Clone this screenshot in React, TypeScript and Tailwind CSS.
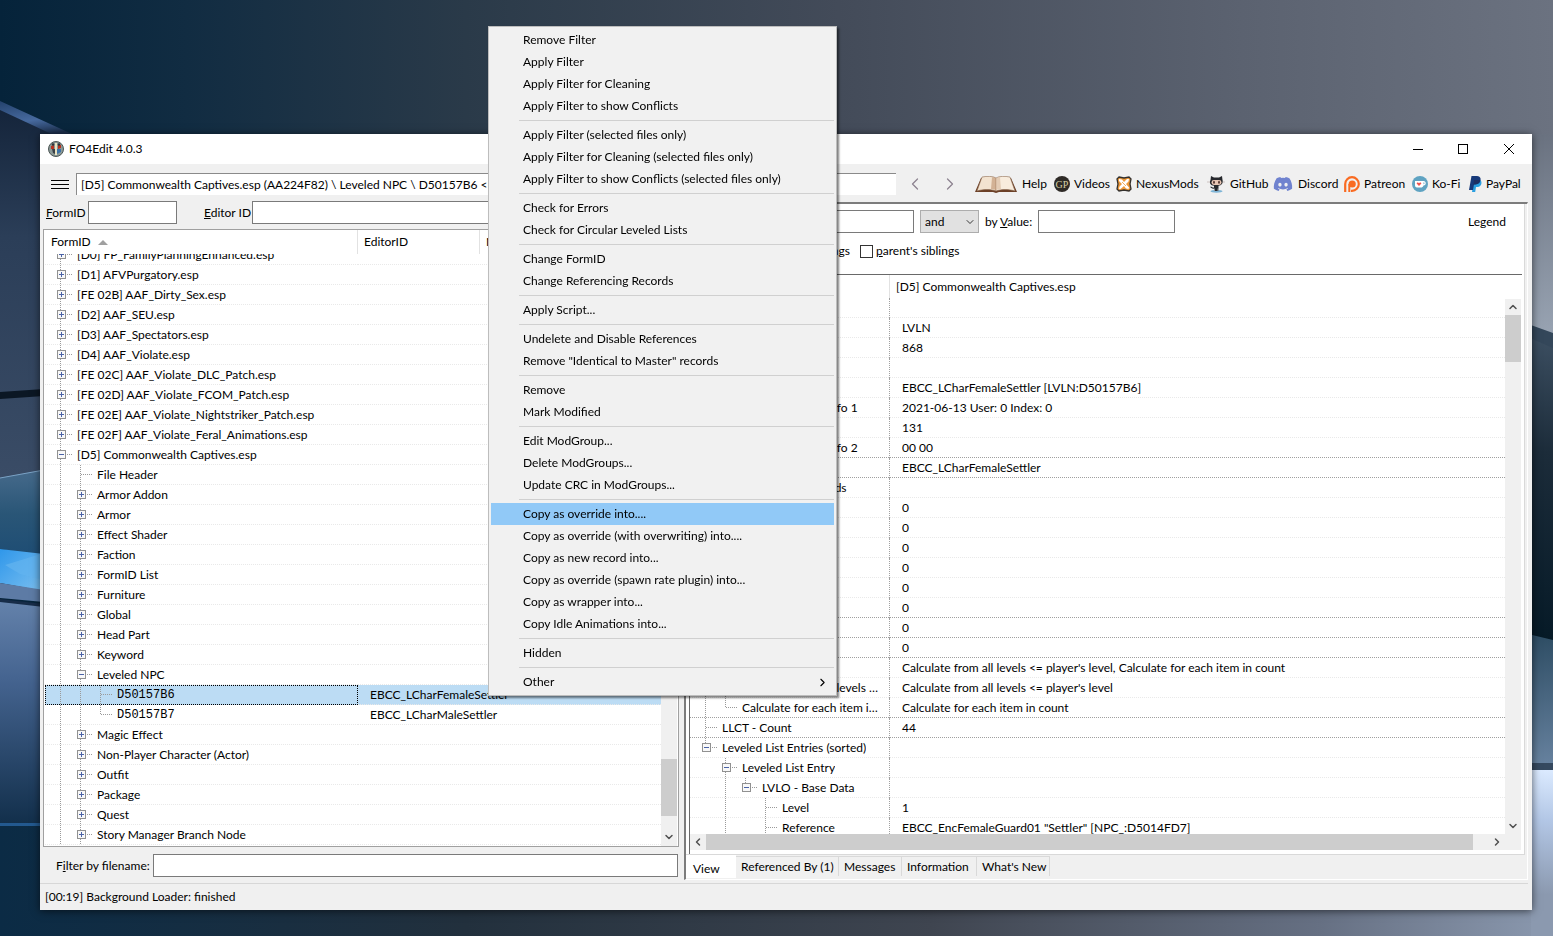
import type { ReactNode } from "react";
import { clsx } from "clsx";
import { ChevronDown, ChevronLeft, ChevronRight, ChevronUp } from "lucide-react";
import { FaDiscord } from "react-icons/fa";

// one 20px cell of a tree's gutter
// v: line passing through, t: branch, l: last branch, +/-: expander, =: expander with nothing below it
type Cell = "v" | "t" | "l" | "+" | "-" | "=" | " ";

type Row = {
  cells: Cell[];
  label: string;
  value?: string;
  mono?: boolean;
  selected?: boolean;
  strong?: boolean;
};

const files = [
  "[D0] FP_FamilyPlanningEnhanced.esp",
  "[D1] AFVPurgatory.esp",
  "[FE 02B] AAF_Dirty_Sex.esp",
  "[D2] AAF_SEU.esp",
  "[D3] AAF_Spectators.esp",
  "[D4] AAF_Violate.esp",
  "[FE 02C] AAF_Violate_DLC_Patch.esp",
  "[FE 02D] AAF_Violate_FCOM_Patch.esp",
  "[FE 02E] AAF_Violate_Nightstriker_Patch.esp",
  "[FE 02F] AAF_Violate_Feral_Animations.esp",
];

const group = (label: string): Row => ({ cells: ["v", "+"], label });

const navRows: Row[] = [
  ...files.map((label): Row => ({ cells: ["+"], label })),
  { cells: ["-"], label: "[D5] Commonwealth Captives.esp" },
  { cells: ["v", "t"], label: "File Header" },
  ...["Armor Addon", "Armor", "Effect Shader", "Faction", "FormID List", "Furniture", "Global", "Head Part", "Keyword"].map(group),
  { cells: ["v", "-"], label: "Leveled NPC" },
  { cells: ["v", "v", "t"], label: "D50157B6", value: "EBCC_LCharFemaleSettler", mono: true, selected: true },
  { cells: ["v", "v", "l"], label: "D50157B7", value: "EBCC_LCharMaleSettler", mono: true },
  ...["Magic Effect", "Non-Player Character (Actor)", "Outfit", "Package", "Quest", "Story Manager Branch Node"].map(group),
];

const recordRows: Row[] = [
  { cells: ["-"], label: "Record Header" },
  { cells: ["v", "t"], label: "Signature", value: "LVLN" },
  { cells: ["v", "t"], label: "Data Size", value: "868" },
  { cells: ["v", "t"], label: "Record Flags" },
  { cells: ["v", "t"], label: "FormID", value: "EBCC_LCharFemaleSettler [LVLN:D50157B6]" },
  { cells: ["v", "t"], label: "Version Control Info 1", value: "2021-06-13 User: 0 Index: 0" },
  { cells: ["v", "t"], label: "Form Version", value: "131" },
  { cells: ["v", "l"], label: "Version Control Info 2", value: "00 00", strong: true },
  { cells: ["t"], label: "EDID - Editor ID", value: "EBCC_LCharFemaleSettler", strong: true },
  { cells: ["-"], label: "OBND - Object Bounds" },
  { cells: ["v", "t"], label: "X1", value: "0" },
  { cells: ["v", "t"], label: "Y1", value: "0" },
  { cells: ["v", "t"], label: "Z1", value: "0" },
  { cells: ["v", "t"], label: "X2", value: "0" },
  { cells: ["v", "t"], label: "Y2", value: "0" },
  { cells: ["v", "l"], label: "Z2", value: "0", strong: true },
  { cells: ["t"], label: "LVLD", value: "0", strong: true },
  { cells: ["t"], label: "LVLM", value: "0", strong: true },
  { cells: ["-"], label: "LVLF - Flags", value: "Calculate from all levels <= player's level, Calculate for each item in count" },
  { cells: ["v", "t"], label: "Calculate from all levels <= player's level", value: "Calculate from all levels <= player's level" },
  { cells: ["v", "l"], label: "Calculate for each item in count", value: "Calculate for each item in count", strong: true },
  { cells: ["t"], label: "LLCT - Count", value: "44", strong: true },
  { cells: ["="], label: "Leveled List Entries (sorted)" },
  { cells: [" ", "-"], label: "Leveled List Entry" },
  { cells: [" ", "v", "="], label: "LVLO - Base Data" },
  { cells: [" ", "v", " ", "t"], label: "Level", value: "1" },
  { cells: [" ", "v", " ", "t"], label: "Reference", value: 'EBCC_EncFemaleGuard01 "Settler" [NPC_:D5014FD7]' },
];

const menu = [
  ["Remove Filter", "Apply Filter", "Apply Filter for Cleaning", "Apply Filter to show Conflicts"],
  ["Apply Filter (selected files only)", "Apply Filter for Cleaning (selected files only)", "Apply Filter to show Conflicts (selected files only)"],
  ["Check for Errors", "Check for Circular Leveled Lists"],
  ["Change FormID", "Change Referencing Records"],
  ["Apply Script..."],
  ["Undelete and Disable References", 'Remove "Identical to Master" records'],
  ["Remove", "Mark Modified"],
  ["Edit ModGroup...", "Delete ModGroups...", "Update CRC in ModGroups..."],
  [
    "Copy as override into....",
    "Copy as override (with overwriting) into....",
    "Copy as new record into...",
    "Copy as override (spawn rate plugin) into...",
    "Copy as wrapper into...",
    "Copy Idle Animations into...",
  ],
  ["Hidden"],
  ["Other"],
];

function Gutter({ cell }: { cell: Cell }) {
  const box = cell === "+" || cell === "-" || cell === "=";
  const down = cell === "v" || cell === "t" || cell === "+" || cell === "-";
  return (
    <svg width="20" height="20" className="shrink-0" shapeRendering="crispEdges" aria-hidden="true">
      {cell !== " " && (
        <path d={down && cell !== "-" ? "M3.5 0V20" : "M3.5 0V10"} stroke="#9a9a9a" strokeDasharray="1 1" fill="none" />
      )}
      {cell === "-" && <path d="M3.5 14V20" stroke="#9a9a9a" strokeDasharray="1 1" />}
      {cell !== " " && cell !== "v" && <path d="M4 9.5H16" stroke="#9a9a9a" strokeDasharray="1 1" />}
      {box && (
        <>
          <rect x="0.5" y="5.5" width="8" height="8" fill="#f8f8f8" stroke="#919191" />
          <path d={cell === "+" ? "M2 9.5H7M4.5 7V12" : "M2 9.5H7"} stroke="#4b63a7" />
        </>
      )}
    </svg>
  );
}

function Desktop() {
  return (
    <svg className="absolute inset-0 h-full w-full" viewBox="0 0 1553 936" preserveAspectRatio="none" aria-hidden="true">
      <defs>
        <linearGradient id="sky" x1="0" y1="0" x2="1" y2="0">
          <stop offset="0" stopColor="#05233a" />
          <stop offset="0.12" stopColor="#112c42" />
          <stop offset="0.3" stopColor="#2a3a49" />
          <stop offset="0.54" stopColor="#434b59" />
          <stop offset="0.8" stopColor="#5b6270" />
          <stop offset="1" stopColor="#6b7280" />
        </linearGradient>
        <linearGradient id="floor" x1="0" y1="0" x2="1" y2="0">
          <stop offset="0" stopColor="#0b2b45" />
          <stop offset="0.3" stopColor="#22303d" />
          <stop offset="0.6" stopColor="#3f4550" />
          <stop offset="0.85" stopColor="#667083" />
          <stop offset="1" stopColor="#8b99af" />
        </linearGradient>
        <linearGradient id="wing" x1="0" y1="0" x2="0" y2="1">
          <stop offset="0" stopColor="#14243a" />
          <stop offset="0.35" stopColor="#2b3e58" />
          <stop offset="1" stopColor="#3a4c66" />
        </linearGradient>
        <linearGradient id="band" x1="0" y1="0" x2="0.3" y2="1">
          <stop offset="0" stopColor="#24426c" />
          <stop offset="0.6" stopColor="#476a9f" />
          <stop offset="1" stopColor="#1c2f4c" />
        </linearGradient>
        <linearGradient id="glass" x1="0" y1="0" x2="0" y2="1">
          <stop offset="0" stopColor="#466a8b" />
          <stop offset="0.5" stopColor="#2a5677" />
          <stop offset="1" stopColor="#1e4d74" />
        </linearGradient>
        <linearGradient id="ice" x1="0" y1="0" x2="1" y2="1">
          <stop offset="0" stopColor="#2f97ea" />
          <stop offset="1" stopColor="#7cc0f0" />
        </linearGradient>
        <linearGradient id="lower" x1="0" y1="0" x2="0" y2="1">
          <stop offset="0" stopColor="#6482ab" />
          <stop offset="0.35" stopColor="#456490" />
          <stop offset="1" stopColor="#122f4b" />
        </linearGradient>
        <linearGradient id="rim" x1="0" y1="0" x2="0" y2="1">
          <stop offset="0" stopColor="#6a7280" />
          <stop offset="1" stopColor="#98a3b2" />
        </linearGradient>
        <linearGradient id="orb" x1="0" y1="0" x2="0" y2="1">
          <stop offset="0" stopColor="#3f5265" />
          <stop offset="0.4" stopColor="#1c2c3a" />
          <stop offset="1" stopColor="#061a27" />
        </linearGradient>
        <linearGradient id="sea" x1="0" y1="0" x2="0" y2="1">
          <stop offset="0" stopColor="#2e4d64" />
          <stop offset="1" stopColor="#66819e" />
        </linearGradient>
        <linearGradient id="snow" x1="0" y1="0" x2="0" y2="1">
          <stop offset="0" stopColor="#dbeaff" />
          <stop offset="0.3" stopColor="#b3c7e6" />
          <stop offset="0.75" stopColor="#8b99af" />
          <stop offset="1" stopColor="#8b99af" />
        </linearGradient>
      </defs>
      <rect width="1553" height="936" fill="url(#sky)" />
      <rect y="826" width="1553" height="110" fill="url(#floor)" />
      <path d="M0 106L76 140V480H0Z" fill="url(#wing)" />
      <path d="M0 101L72 134L60 138L0 110Z" fill="url(#band)" />
      <path d="M0 392L44 389V396L0 399Z" fill="#0b1724" />
      <path d="M0 478L44 470V556L0 549Z" fill="url(#glass)" />
      <path d="M0 478L44 470" stroke="#7ba3c6" />
      <path d="M0 549L44 554V591L0 583Z" fill="url(#ice)" />
      <path d="M5 565L44 553V580L20 574Z" fill="#63b4f0" opacity="0.7" />
      <path d="M0 583L44 590V602L0 598Z" fill="#5d7ba5" />
      <path d="M0 600L44 606V824H0Z" fill="url(#lower)" />
      <path d="M0 599L44 604V607L0 602Z" fill="#172c48" />
      <rect y="823" width="44" height="3" fill="#23598f" />
      <rect x="1531" y="134" width="22" height="200" fill="url(#rim)" />
      <path d="M1528 326L1553 334V640H1528Z" fill="url(#orb)" />
      <path d="M1528 324L1553 333V348L1528 337Z" fill="#34475a" />
      <path d="M1528 634L1553 640V764H1528Z" fill="url(#sea)" />
      <rect x="1528" y="763" width="25" height="8" fill="#35495f" />
      <rect x="1531" y="770" width="22" height="166" fill="url(#snow)" />
    </svg>
  );
}

function AppIcon() {
  return (
    <svg width="16" height="16" viewBox="0 0 16 16" aria-hidden="true">
      <circle cx="8" cy="8" r="7.5" fill="#8c9a98" stroke="#4c5654" />
      <path d="M8 2V14" stroke="#e9e2c0" strokeWidth="2" />
      <path d="M3 5L6 4V8H3ZM10 4H13V7L10 8Z" fill="#b8321f" />
      <path d="M4 8H7V13L5 12Z" fill="#3a4045" />
      <path d="M9 8H13V11L9 13Z" fill="#3b72a8" />
      <circle cx="5" cy="3.5" r="1.2" fill="#2c3338" />
      <circle cx="11" cy="3.5" r="1.2" fill="#2c3338" />
    </svg>
  );
}

function Book() {
  return (
    <svg width="42" height="17" viewBox="0 0 42 17" aria-hidden="true">
      <path d="M6 2L0 16H18L21 17L24 16H42L36 2Z" fill="#6b3f26" />
      <path d="M7 1C12 0 18 0 21 2L21 15C16 13 8 13 2 15Z" fill="#f3e3d0" stroke="#8c6a50" strokeWidth="0.6" />
      <path d="M35 1C30 0 24 0 21 2L21 15C26 13 34 13 40 15Z" fill="#f8ecdd" stroke="#8c6a50" strokeWidth="0.6" />
      <path d="M17 1.5C19 1 20 1.5 21 2.5V14.5C20 13.5 18 13 16 13Z" fill="#c49c7c" opacity="0.7" />
      <path d="M21 2.5C22 1.5 24 1 25 1.5L26 13C24 13 22 13.5 21 14.5Z" fill="#dcbfa4" opacity="0.7" />
    </svg>
  );
}

function GamerPoets() {
  return (
    <svg width="16" height="16" viewBox="0 0 16 16" aria-hidden="true">
      <circle cx="8" cy="8" r="8" fill="#2e2a26" />
      <text x="8" y="11.5" textAnchor="middle" fontSize="10" fontFamily="Liberation Serif, serif" fill="#d9cfa4">GP</text>
    </svg>
  );
}

function Nexus() {
  return (
    <svg width="16" height="16" viewBox="0 0 16 16" aria-hidden="true">
      <path d="M3 1L8 2L13 1L15 3L14 8L15 13L13 15L8 14L3 15L1 13L2 8L1 3Z" fill="#ee9a3a" stroke="#34302c" strokeWidth="1.3" />
      <path d="M3 3L6 3.5L8 6L11 3L13 3L12.500 5.500L10 8L13 11.500L12.500 13L10 12.500L8 10L4.500 13L3 13L3.500 10.500L6 8L3 5Z" fill="#fff" />
      <path d="M6 6L10 10" stroke="#ee9a3a" strokeWidth="0.8" />
    </svg>
  );
}

function Octocat() {
  return (
    <svg width="18" height="17" viewBox="0 0 18 17" aria-hidden="true">
      <ellipse cx="9.5" cy="15.3" rx="6" ry="1.5" fill="#7db4d6" />
      <path d="M4 0L7 1.5H12L15 0L15.5 4C16.5 7 14.5 9.5 11.5 9.8V15H7V9.8C3.5 9.5 2 7 3.5 4Z" fill="#27292d" />
      <rect x="4.5" y="4" width="10" height="5" rx="2.4" fill="#e8c6b4" />
      <ellipse cx="7" cy="6.3" rx="1" ry="1.5" fill="#5b3c36" />
      <ellipse cx="12" cy="6.3" rx="1" ry="1.5" fill="#5b3c36" />
      <path d="M7.5 15V12.5M11 15V12.5" stroke="#fff" strokeWidth="0.5" />
      <path d="M7 12C5 13 5 11 3.5 11" stroke="#27292d" strokeWidth="1.2" fill="none" />
      <path d="M0 6H3M15.5 6H18" stroke="#b9a9a4" strokeWidth="0.6" />
    </svg>
  );
}

function Patreon() {
  return (
    <svg width="16" height="16" viewBox="0 0 16 16" fill="none" stroke="#f96b22" aria-hidden="true">
      <path d="M1.2 16V8A6.8 6.8 0 1 1 8 14.8H7" strokeWidth="2.2" />
      <path d="M5.3 16V8" strokeWidth="2" />
      <circle cx="8.2" cy="8" r="3.6" fill="#f96b22" stroke="none" />
    </svg>
  );
}

function KoFi() {
  return (
    <svg width="16" height="16" viewBox="0 0 16 16" aria-hidden="true">
      <circle cx="8" cy="8" r="8" fill="#5fa3c2" />
      <path d="M3 5H11.5C14.5 5 14.5 9.5 11.5 9.5C11 11 10 11.5 9 11.5H5C3.5 11.5 3 10.5 3 9Z" fill="#fff" />
      <path d="M11.5 6.3C12.8 6.3 12.8 8.3 11.5 8.3Z" fill="#5fa3c2" />
      <path d="M7 10L4.8 7.8C4.2 6.5 6 5.800 7 7C8 5.800 9.800 6.500 9.200 7.800Z" fill="#f0524f" />
    </svg>
  );
}

function PayPal() {
  return (
    <svg width="14" height="16" viewBox="0 0 14 16" aria-hidden="true">
      <path d="M5 4H11C13.5 5 13 11 8.5 11H7L6.2 16H3Z" fill="#2a9fe0" />
      <path d="M2.5 0H8C12 0 12.5 4 10.5 6.5C9.5 8 7.5 8.5 5 8.5L4 14H0Z" fill="#173a7a" />
      <path d="M5 4H10.9C11.5 5 10.5 8.5 5 8.5L4.5 9Z" fill="#1d2f62" />
    </svg>
  );
}

const links: { label: string; icon: ReactNode; className: string }[] = [
  { label: "Help", icon: <Book />, className: "w-[79px] gap-[5px]" },
  { label: "Videos", icon: <GamerPoets />, className: "w-[62px] gap-1" },
  { label: "NexusMods", icon: <Nexus />, className: "w-[91px] gap-1" },
  { label: "GitHub", icon: <Octocat />, className: "w-[66px] gap-[5px]" },
  { label: "Discord", icon: <FaDiscord size={20} color="#7083cf" />, className: "w-[71px] gap-[5px]" },
  { label: "Patreon", icon: <Patreon />, className: "w-[68px] gap-1" },
  { label: "Ko-Fi", icon: <KoFi />, className: "w-[57px] gap-1" },
  { label: "PayPal", icon: <PayPal />, className: "w-[54px] gap-[3px]" },
];

function TitleBar() {
  return (
    <header className="flex h-[30px] items-center bg-white pl-2">
      <AppIcon />
      <h1 className="ml-[5px] flex-1">FO4Edit 4.0.3</h1>
      <button aria-label="Minimize" className="flex h-full w-[45px] items-center justify-center">
        <span className="h-px w-[10px] bg-black" />
      </button>
      <button aria-label="Maximize" className="flex h-full w-[45px] items-center justify-center">
        <span className="h-[10px] w-[10px] border border-black" />
      </button>
      <button aria-label="Close" className="flex h-full w-[47px] items-center justify-center">
        <svg width="10" height="10" stroke="#000" aria-hidden="true">
          <path d="M0 0L10 10M10 0L0 10" />
        </svg>
      </button>
    </header>
  );
}

function Toolbar() {
  return (
    <div className="flex h-[37px] items-center pt-[3px] pr-[9px] pl-[11px]">
      <button aria-label="Main menu" className="flex w-[18px] flex-col gap-[3px]">
        <span className="h-px bg-black" />
        <span className="h-px bg-black" />
        <span className="h-px bg-black" />
      </button>
      <input
        aria-label="Path"
        readOnly
        defaultValue="[D5] Commonwealth Captives.esp (AA224F82) \ Leveled NPC \ D50157B6 <EBCC_LCharFemaleSettler>"
        className="ml-[7px] h-[22px] min-w-0 flex-1 border-t border-l border-[#8a8a8a] bg-white px-1"
      />
      <button aria-label="Back" className="ml-[9px] w-5 text-[#8d8391]">
        <ChevronLeft size={20} strokeWidth={1.5} />
      </button>
      <button aria-label="Forward" className="ml-[15px] w-5 text-[#8d8391]">
        <ChevronRight size={20} strokeWidth={1.5} />
      </button>
      <nav className="ml-[15px] flex">
        {links.map(({ label, icon, className }) => (
          <a key={label} href="#" className={clsx("flex shrink-0 items-center whitespace-nowrap", className)}>
            {icon}
            {label}
          </a>
        ))}
      </nav>
    </div>
  );
}

const field = "h-[23px] border border-[#7a7a7a] bg-white px-1";

function NavTree() {
  return (
    <div className="flex min-h-0 flex-1 border border-[#a0a0a0] bg-white pl-px">
      <div
        className="min-w-0 flex-1 overflow-hidden"
        ref={(el) => {
          if (el) el.scrollTop = 9;
        }}
      >
        <table className="mb-5 w-full table-fixed border-separate border-spacing-0 text-left">
          <thead>
            <tr className="h-6">
              <th className="sticky top-0 w-[313px] border-r border-[#e2e2e2] bg-white p-0 pl-[6px] font-normal">
                <span className="flex items-center gap-[7px]">
                  FormID
                  <svg width="10" height="5" aria-hidden="true">
                    <path d="M0 5L5 0L10 5Z" fill="#a0a0a0" />
                  </svg>
                </span>
              </th>
              <th className="sticky top-0 w-[122px] border-r border-[#e2e2e2] bg-white p-0 pl-[6px] font-normal">EditorID</th>
              <th className="sticky top-0 bg-white p-0 pl-[6px] font-normal">Name</th>
            </tr>
          </thead>
          <tbody>
            {navRows.map((row) => (
              <tr key={row.label} className={row.selected ? "bg-[#bcdcf4]" : undefined}>
                <td className="p-0">
                  <div
                    className={clsx(
                      "flex h-5 items-center border-dotted pl-3",
                      row.selected ? "outline-1 -outline-offset-1 outline-dotted outline-black" : "border-b border-[#e9e9e9]",
                    )}
                  >
                    {row.cells.map((cell, i) => (
                      <Gutter key={i} cell={cell} />
                    ))}
                    <span className={row.mono ? "font-['Liberation_Mono',monospace]" : undefined}>{row.label}</span>
                  </div>
                </td>
                <td colSpan={2} className="p-0">
                  <div className="flex h-5 items-center border-b border-dotted border-[#e9e9e9] pl-3">{row.value}</div>
                </td>
              </tr>
            ))}
          </tbody>
        </table>
      </div>
      <div className="mt-6 mr-px flex w-4 flex-col items-center bg-[#f0f0f0] text-[#505050]">
        <ChevronUp size={12} strokeWidth={3} className="my-[2px]" />
        <span className="flex-1" />
        <span className="h-[57px] w-full bg-[#cdcdcd]" />
        <ChevronDown size={12} strokeWidth={3} className="mt-[15px] mb-[3px]" />
      </div>
    </div>
  );
}

function LeftPane() {
  return (
    <section className="flex w-[636px] shrink-0 flex-col">
      <div className="flex items-center">
        <label htmlFor="form-id" className="w-[45px] pl-[3px] whitespace-nowrap">
          <u>F</u>ormID
        </label>
        <input id="form-id" className={clsx(field, "w-[89px]")} />
        <label htmlFor="editor-id" className="ml-[27px] w-12 whitespace-nowrap">
          <u>E</u>ditor ID
        </label>
        <input id="editor-id" className={clsx(field, "min-w-0 flex-1")} />
      </div>
      <div className="mt-[5px] flex min-h-0 flex-1 flex-col">
        <NavTree />
      </div>
      <div className="mt-[7px] mb-[6px] flex items-center">
        <label htmlFor="file-filter" className="w-[110px] pl-[13px] whitespace-nowrap">
          F<u>i</u>lter by filename:
        </label>
        <input id="file-filter" className={clsx(field, "mr-px min-w-0 flex-1")} />
      </div>
    </section>
  );
}

function RecordTable() {
  return (
    <div className="ml-[3px] mr-[2px] flex min-h-0 flex-1 flex-col border-t border-l border-[#696969]">
      <div className="flex min-h-0 flex-1">
        <div className="min-w-0 flex-1 overflow-hidden">
          <table className="w-full table-fixed border-separate border-spacing-0 text-left">
            <thead>
              <tr className="h-[23px]">
                <th className="w-[200px] border-r border-[#e2e2e2] p-0 font-normal" />
                <th className="p-0 pl-[6px] font-normal">[D5] Commonwealth Captives.esp</th>
              </tr>
            </thead>
            <tbody>
              {recordRows.map((row, i) => {
                const line = row.strong ? "border-[#a0a0a0]" : "border-[#e9e9e9]";
                return (
                  <tr key={i}>
                    <td className="border-r border-dotted border-[#a0a0a0] p-0">
                      <div className={clsx("flex h-5 items-center border-b border-dotted pr-2 pl-3", line)}>
                        {row.cells.map((cell, j) => (
                          <Gutter key={j} cell={cell} />
                        ))}
                        <span className="truncate">{row.label}</span>
                      </div>
                    </td>
                    <td className="p-0">
                      <div className={clsx("flex h-5 items-center border-b border-dotted pl-3 whitespace-nowrap", line)}>
                        {row.value}
                      </div>
                    </td>
                  </tr>
                );
              })}
            </tbody>
          </table>
        </div>
        <div className="mt-6 mr-px flex w-4 flex-col items-center bg-[#f0f0f0] text-[#505050]">
          <ChevronUp size={12} strokeWidth={3} className="my-[2px]" />
          <span className="h-[47px] w-full bg-[#cdcdcd]" />
          <span className="flex-1" />
          <ChevronDown size={12} strokeWidth={3} className="my-[2px]" />
        </div>
      </div>
      <div className="mb-1 flex h-4 items-center bg-[#f0f0f0] text-[#505050]">
        <ChevronLeft size={12} strokeWidth={3} className="mx-[2px]" />
        <span className="h-full flex-1 bg-[#cdcdcd]" />
        <ChevronRight size={12} strokeWidth={3} className="mr-[18px] ml-[18px]" />
        <span className="h-full w-px bg-white" />
      </div>
    </div>
  );
}

const tabs = ["View", "Referenced By (1)", "Messages", "Information", "What's New"];
const tabWidths = ["w-[50px]", "w-[103px]", "w-[63px]", "w-[75px]", "w-[73px]"];

function RightPane() {
  return (
    <section className="mt-px mr-1 mb-[3px] ml-[5px] flex min-w-0 flex-1 flex-col border-2 border-r border-b border-t-[#7c7c7c] border-r-white border-b-white border-l-[#7c7c7c]">
      <div className="mr-[2px] flex min-h-0 flex-1 flex-col border-r border-b border-[#d9d9d9] bg-white">
        <div className="flex items-center pt-[6px]">
          <label htmlFor="by-name" className="w-[78px] pl-2">
            by <u>N</u>ame:
          </label>
          <input id="by-name" className={clsx(field, "w-[150px]")} />
          <div className="relative ml-[6px]">
            <select aria-label="Operator" className="h-[23px] w-[59px] appearance-none border border-[#adadad] bg-[#e1e1e1] pl-1">
              <option>and</option>
              <option>or</option>
            </select>
            <ChevronDown size={12} strokeWidth={1.5} className="pointer-events-none absolute top-[6px] right-[3px]" />
          </div>
          <label htmlFor="by-value" className="ml-[6px] w-[53px] whitespace-nowrap">
            by <u>V</u>alue:
          </label>
          <input id="by-value" className={clsx(field, "w-[137px]")} />
          <button className="mr-[18px] ml-auto">Legend</button>
        </div>
        <div className="mt-2 mb-[13px] flex h-5 items-center">
          <label className="flex w-[164px] items-center justify-end gap-[3px]">
            <input type="checkbox" className="h-[13px] w-[13px] appearance-none border border-[#333] bg-white" />
            siblings
          </label>
          <label className="ml-[10px] flex items-center gap-[3px]">
            <input type="checkbox" className="h-[13px] w-[13px] appearance-none border border-[#333] bg-white" />
            <span>
              <u>p</u>arent's siblings
            </span>
          </label>
        </div>
        <RecordTable />
      </div>
      <div role="tablist" className="flex h-6 items-start">
        {tabs.map((tab, i) => (
          <button
            key={tab}
            role="tab"
            aria-selected={i === 0}
            className={clsx(
              "text-left whitespace-nowrap",
              tabWidths[i],
              i === 0 ? "h-[23px] bg-white pt-1 pl-[7px]" : "mt-px h-5 border-t border-r border-[#d9d9d9] pl-[5px]",
            )}
          >
            {tab}
          </button>
        ))}
      </div>
    </section>
  );
}

function ContextMenu() {
  return (
    <div
      role="menu"
      className="absolute top-[26px] left-[488px] w-[349px] border border-[#bdbdbd] bg-[#f1f1f1] p-[2px] shadow-[2px_2px_2px_rgba(0,0,0,0.5)]"
    >
      {menu.map((items, i) => (
        <div key={i}>
          {i > 0 && <hr className="my-[3px] ml-7 border-[#d0d0d0]" />}
          {items.map((item) => (
            <button
              key={item}
              role="menuitem"
              className={clsx(
                "flex h-[22px] w-full items-center justify-between pr-[5px] pl-8",
                item === "Copy as override into...." && "bg-[#91c9f7]",
              )}
            >
              {item}
              {item === "Other" && <ChevronRight size={13} strokeWidth={2} />}
            </button>
          ))}
        </div>
      ))}
    </div>
  );
}

export default function App() {
  return (
    <div className="relative h-screen overflow-hidden font-['Lato','Open_Sans',sans-serif] text-[12px] leading-4 text-black">
      <Desktop />
      <main className="absolute top-[134px] right-[21px] bottom-[26px] left-10 flex flex-col bg-[#f0f0f0] shadow-[0_1px_8px_rgba(0,0,0,0.6)]">
        <TitleBar />
        <Toolbar />
        <div className="flex min-h-0 flex-1 pl-[3px]">
          <LeftPane />
          <RightPane />
        </div>
        <footer className="mr-1 flex h-[27px] items-center border-t border-[#d7d7d7] pl-[5px]">[00:19] Background Loader: finished</footer>
      </main>
      <ContextMenu />
    </div>
  );
}
